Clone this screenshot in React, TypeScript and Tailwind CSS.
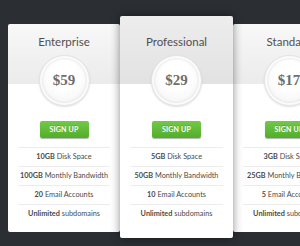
import React from "react";

type Plan = {
  name: string;
  price: string;
  features: [string, string][];
  featured?: boolean;
};

const plans: Plan[] = [
  {
    name: "Enterprise",
    price: "$59",
    features: [
      ["10GB", " Disk Space"],
      ["100GB", " Monthly Bandwidth"],
      ["20", " Email Accounts"],
      ["Unlimited", " subdomains"],
    ],
  },
  {
    name: "Professional",
    price: "$29",
    featured: true,
    features: [
      ["5GB", " Disk Space"],
      ["50GB", " Monthly Bandwidth"],
      ["10", " Email Accounts"],
      ["Unlimited", " subdomains"],
    ],
  },
  {
    name: "Standard",
    price: "$17",
    features: [
      ["3GB", " Disk Space"],
      ["25GB", " Monthly Bandwidth"],
      ["5", " Email Accounts"],
      ["Unlimited", " subdomains"],
    ],
  },
];

function Card({ plan }: { plan: Plan }) {
  const f = plan.featured;
  return (
    <div
      className={
        f
          ? "relative z-10 w-[113px] h-[222px] shrink-0 rounded-[2px] pt-[19px] flex flex-col items-center bg-[linear-gradient(to_bottom,#ededed,#e2e2e2_68px,#ffffff_68px)] shadow-[0_0_10px_rgba(0,0,0,0.45)]"
          : "w-[112px] h-[208px] mt-[8px] shrink-0 rounded-[2px] pt-[11px] flex flex-col items-center bg-[linear-gradient(to_bottom,#f8f8f8,#ebebeb_60px,#ffffff_60px)]"
      }
    >
      <div className="h-[14px] leading-[14px] text-[11.5px] text-[#505050] font-['Lato','Open_Sans',sans-serif] whitespace-nowrap">
        {plan.name}
      </div>
      <div className="mt-[6px] w-[51px] h-[51px] rounded-full bg-[#fbfbfb] border border-[#e4e4e4] shadow-[0_1px_2px_rgba(0,0,0,0.12)] flex items-center justify-center">
        <div className="w-[45px] h-[45px] rounded-full bg-[radial-gradient(circle_at_50%_40%,#ffffff_40%,#f0f0f0_100%)] shadow-[inset_0_0_3px_rgba(0,0,0,0.12)] flex items-center justify-center">
          <span className="text-[15px] font-bold text-[#6e6e6e] font-['Liberation_Serif','DejaVu_Serif',serif] leading-none">
            {plan.price}
          </span>
        </div>
      </div>
      <div className="mt-[15px] w-[49px] h-[17px] rounded-[2px] bg-[linear-gradient(to_bottom,#72c947,#52ad2b)] shadow-[0_1px_1px_rgba(0,0,0,0.3)] flex items-center justify-center text-white text-[7px] font-bold tracking-[0.2px] font-['Lato','Open_Sans',sans-serif] [text-shadow:0_-1px_0_rgba(0,0,0,0.15)]">
        SIGN UP
      </div>
      <div className="mt-[9px] w-full px-[10px]">
        {plan.features.map(([b, r], i) => (
          <div
            key={i}
            className="h-[19px] border-t border-[#ececec] flex items-center justify-center text-[7.3px] text-[#4a4a4a] font-['Lato','Open_Sans',sans-serif] whitespace-nowrap"
          >
            <span className="font-bold">{b}</span>
            <span className="whitespace-pre">{r}</span>
          </div>
        ))}
      </div>
    </div>
  );
}

export default function App() {
  return (
    <div className="w-[300px] h-[246px] overflow-hidden bg-[#2b2e33]">
      <div className="flex pl-[8px] pt-[16px]">
        {plans.map((p) => (
          <Card key={p.name} plan={p} />
        ))}
      </div>
    </div>
  );
}
